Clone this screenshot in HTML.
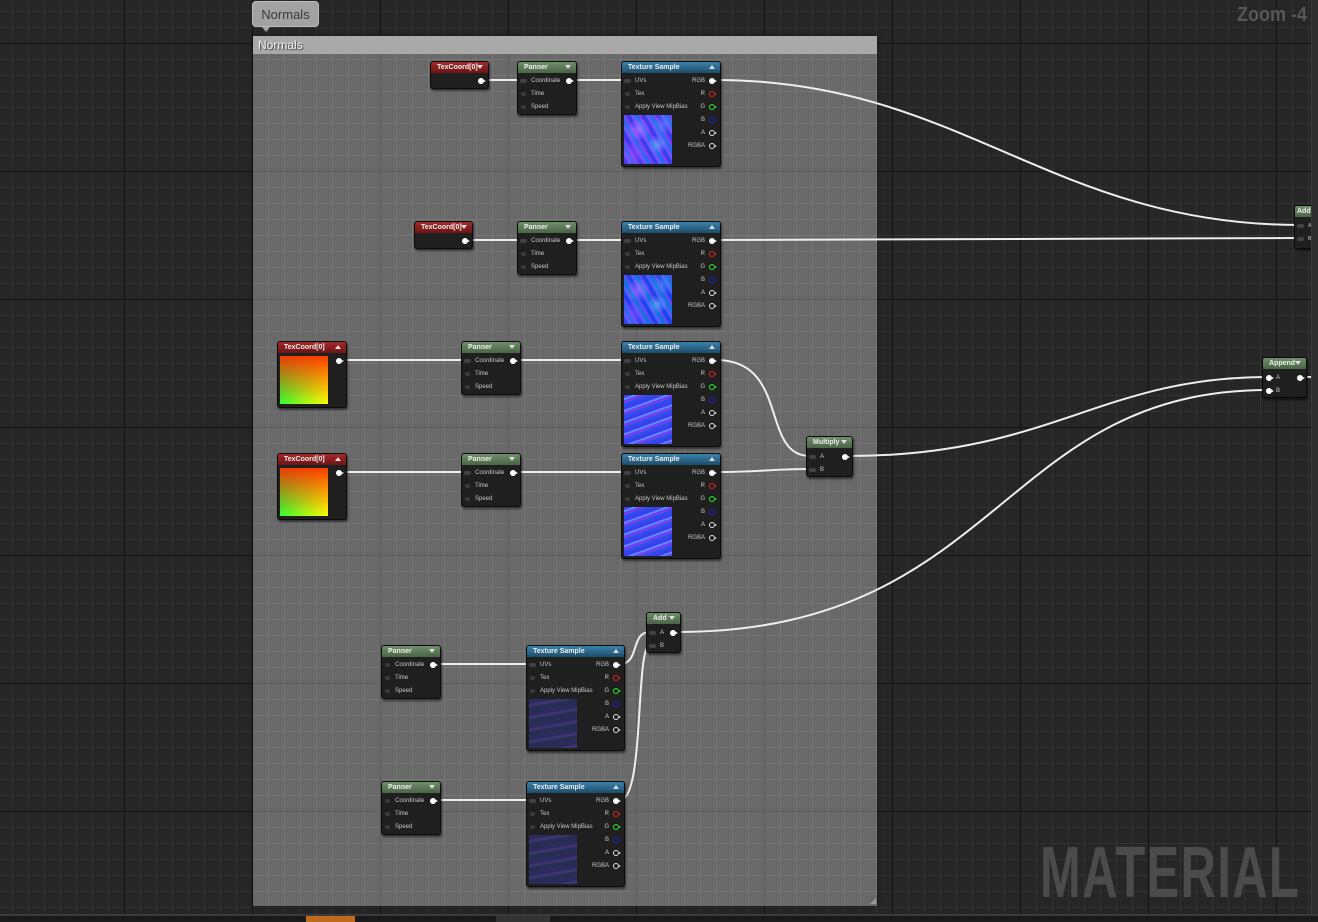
<!DOCTYPE html>
<html><head><meta charset="utf-8"><style>
*{margin:0;padding:0;box-sizing:border-box}
body{width:1318px;height:922px;overflow:hidden;position:relative;font-family:"Liberation Sans",sans-serif;
background-color:#262626;
background-image:
linear-gradient(to right,#141414 1px,transparent 1px),
linear-gradient(to bottom,#141414 1px,transparent 1px),
linear-gradient(to right,#323232 1px,transparent 1px),
linear-gradient(to bottom,#323232 1px,transparent 1px);
background-size:128px 128px,128px 128px,16px 16px,16px 16px;
background-position:124px 43px,124px 43px,12px 11px,12px 11px;}
.cm{position:absolute;left:253px;top:36px;width:624px;height:870px;background-color:#696969;
background-image:
linear-gradient(to right,#5c5c5c 1px,transparent 1px),
linear-gradient(to bottom,#5c5c5c 1px,transparent 1px),
linear-gradient(to right,#767676 1px,transparent 1px),
linear-gradient(to bottom,#767676 1px,transparent 1px);
background-size:128px 128px,128px 128px,16px 16px,16px 16px;
background-position:-129px 7px,-129px 7px,-241px 7px,-241px 7px;box-shadow:0 0 4px rgba(0,0,0,.5)}
.cmh{position:absolute;left:253px;top:36px;width:624px;height:18px;background:#a9a9a9;color:#f2f2f2;font-size:12px;line-height:19px;padding-left:5px;text-shadow:1px 1px 1px #333}
.tip{position:absolute;left:252px;top:1px;width:67px;height:26px;background:#a2a2a2;border-radius:4px;color:#3a3a3a;font-size:13px;line-height:25px;text-align:center;border:1px solid #bbb}
.tip:after{content:"";position:absolute;left:9px;bottom:-6px;border:4px solid transparent;border-top:5px solid #a2a2a2;border-bottom:0}
.n{position:absolute;background:#1e1f1e;border:1px solid #0b0b0b;border-radius:3px;box-shadow:1px 2px 2px rgba(0,0,0,.55)}
.h{height:11px;border-radius:2px 2px 0 0;font-size:7px;font-weight:bold;color:#eee;padding-left:6px;line-height:11px;position:relative;white-space:nowrap;overflow:hidden}
.h:after{content:"";position:absolute;right:5px;top:3px;border:3px solid transparent;border-top:4px solid #ddd;border-bottom:0}
.h.up:after{border-top:0;border-bottom:4px solid #ddd}
.red{background:linear-gradient(#a32a2a,#6e1414)}
.grn{background:linear-gradient(#6f8f6a,#4a6446)}
.blu{background:linear-gradient(#3a82aa,#1f4d6a)}
.l{position:absolute;font-size:6px;color:#c8c8c8;line-height:7px;white-space:nowrap;margin-top:1px}
.rr{position:absolute;font-size:6px;color:#c8c8c8;line-height:7px;text-align:right;white-space:nowrap;margin-top:1px}
.pi{position:absolute;width:7px;height:4px;border-radius:3px;background:#3a3a3a}
.po{position:absolute;width:6px;height:6px;border-radius:50%;background:#fff}
.po:after{content:"";position:absolute;left:6px;top:1.5px;border:1.5px solid transparent;border-left:2px solid #fff;border-right:0}
.ph{position:absolute;width:6px;height:6px;border-radius:50%;border:1px solid #ddd}
.ph:after{content:"";position:absolute;left:5px;top:0.5px;border:1.5px solid transparent;border-left:2px solid currentColor;border-right:0}
.img{position:absolute;left:2px;width:48px;height:49px}
.nm{background:
radial-gradient(circle at 30% 30%,rgba(190,120,255,.7),transparent 25%),
radial-gradient(circle at 70% 60%,rgba(120,200,255,.6),transparent 22%),
radial-gradient(circle at 20% 80%,rgba(170,70,255,.6),transparent 25%),
radial-gradient(circle at 80% 20%,rgba(90,150,255,.6),transparent 20%),
repeating-linear-gradient(60deg,#3b3cf0 0 4px,#6a55ff 4px 7px,#2a68ee 7px 11px,#8a3cf5 11px 13px);}
.nw{background:
repeating-linear-gradient(160deg,#3d3cf2 0 3px,#5a8cff 3px 5px,#7040f0 5px 8px,#2a50e8 8px 11px),#3b3cf0;}
.dk{background:repeating-linear-gradient(170deg,#2c2c5c 0 5px,#3d3570 5px 8px,#262e52 8px 12px)}
.tc{background:linear-gradient(to right,#3f3 0%,#ff0 100%);position:absolute;left:2px;top:14px;width:48px;height:48px}
.tc:after{content:"";position:absolute;inset:0;background:linear-gradient(to top,rgba(255,255,0,0),rgba(255,40,0,.9) 100%)}
.zoom{position:absolute;left:1237px;top:4px;font-size:20px;font-weight:bold;color:#575757;transform:scaleX(.9);transform-origin:left top}
.mat{position:absolute;left:1040px;top:832px;font-size:72px;font-weight:bold;color:#4b4b4b;transform:scaleX(.68);transform-origin:left top;letter-spacing:2px;white-space:nowrap}
.bar{position:absolute;left:0;top:914px;width:1318px;height:8px;background:#1a1a1a;border-top:2px solid #3a3a3a}
</style></head><body>
<div class="zoom">Zoom -4</div>
<div class="mat">MATERIAL</div>
<div class="cm"></div>
<div class="cmh">Normals</div>
<div class="tip">Normals</div>
<div style="position:absolute;left:870px;top:898px;border:3px solid transparent;border-right:3px solid #999;border-bottom:3px solid #999"></div>

<svg width="1318" height="922" style="position:absolute;left:0;top:0" fill="none" stroke="#eee" stroke-width="2">
<path d="M487 80H520M573 80H628M573 240H628M469 240H520"/>
<path d="M716 80C960 80 1050 225 1300 225"/>
<path d="M716 240C900 240 1100 238 1300 238"/>
<path d="M343 360H466M517 360H628M343 472H466M517 472H628"/>
<path d="M716 360C790 360 760 456 810 456"/>
<path d="M716 472C760 472 770 469 810 469"/>
<path d="M848 456C1050 456 1100 377 1268 377"/>
<path d="M676 632C1000 632 1000 390 1268 390"/>
<path d="M1300 377H1318"/>
<path d="M437 664H532M437 800H532"/>
<path d="M620 664C640 664 630 632 650 632"/>
<path d="M620 800C645 800 635 645 650 645"/>
</svg>

<!-- Row1 -->
<div class="n" style="left:430px;top:61px;width:59px;height:28px"><div class="h red">TexCoord[0]</div><div class="po" style="left:47px;top:16px"></div></div>
<div class="n" style="left:517px;top:61px;width:60px;height:54px"><div class="h grn">Panner</div>
<div class="pi" style="left:2px;top:17px;background:#444"></div><div class="l" style="left:13px;top:15px">Coordinate</div><div class="po" style="left:48px;top:16px"></div>
<div class="pi" style="left:3px;top:30px;width:5px"></div><div class="l" style="left:13px;top:28px">Time</div>
<div class="pi" style="left:3px;top:43px;width:5px"></div><div class="l" style="left:13px;top:41px">Speed</div></div>
<div class="n" style="left:621px;top:61px;width:100px;height:106px"><div class="h blu up">Texture Sample</div>
<div class="pi" style="left:2px;top:17px;background:#444"></div><div class="l" style="left:13px;top:15px">UVs</div>
<div class="pi" style="left:3px;top:30px;width:5px"></div><div class="l" style="left:13px;top:28px">Tex</div>
<div class="pi" style="left:3px;top:43px;width:5px"></div><div class="l" style="left:13px;top:41px">Apply View MipBias</div>
<div class="rr" style="right:15px;top:15px">RGB</div><div class="po" style="left:87px;top:16px"></div>
<div class="rr" style="right:15px;top:28px">R</div><div class="ph" style="left:87px;top:29px;border-color:#e22;color:#e22"></div>
<div class="rr" style="right:15px;top:41px">G</div><div class="ph" style="left:87px;top:42px;border-color:#2e2;color:#2e2"></div>
<div class="rr" style="right:15px;top:54px">B</div><div class="ph" style="left:87px;top:55px;border-color:#22c;color:#22c"></div>
<div class="rr" style="right:15px;top:67px">A</div><div class="ph" style="left:87px;top:68px;color:#ddd"></div>
<div class="rr" style="right:15px;top:80px">RGBA</div><div class="ph" style="left:87px;top:81px;color:#ddd"></div>
<div class="img nm" style="top:53px"></div></div>

<!-- Row2 -->
<div class="n" style="left:414px;top:221px;width:59px;height:28px"><div class="h red">TexCoord[0]</div><div class="po" style="left:47px;top:16px"></div></div>
<div class="n" style="left:517px;top:221px;width:60px;height:54px"><div class="h grn">Panner</div>
<div class="pi" style="left:2px;top:17px;background:#444"></div><div class="l" style="left:13px;top:15px">Coordinate</div><div class="po" style="left:48px;top:16px"></div>
<div class="pi" style="left:3px;top:30px;width:5px"></div><div class="l" style="left:13px;top:28px">Time</div>
<div class="pi" style="left:3px;top:43px;width:5px"></div><div class="l" style="left:13px;top:41px">Speed</div></div>
<div class="n" style="left:621px;top:221px;width:100px;height:106px"><div class="h blu up">Texture Sample</div>
<div class="pi" style="left:2px;top:17px;background:#444"></div><div class="l" style="left:13px;top:15px">UVs</div>
<div class="pi" style="left:3px;top:30px;width:5px"></div><div class="l" style="left:13px;top:28px">Tex</div>
<div class="pi" style="left:3px;top:43px;width:5px"></div><div class="l" style="left:13px;top:41px">Apply View MipBias</div>
<div class="rr" style="right:15px;top:15px">RGB</div><div class="po" style="left:87px;top:16px"></div>
<div class="rr" style="right:15px;top:28px">R</div><div class="ph" style="left:87px;top:29px;border-color:#e22;color:#e22"></div>
<div class="rr" style="right:15px;top:41px">G</div><div class="ph" style="left:87px;top:42px;border-color:#2e2;color:#2e2"></div>
<div class="rr" style="right:15px;top:54px">B</div><div class="ph" style="left:87px;top:55px;border-color:#22c;color:#22c"></div>
<div class="rr" style="right:15px;top:67px">A</div><div class="ph" style="left:87px;top:68px;color:#ddd"></div>
<div class="rr" style="right:15px;top:80px">RGBA</div><div class="ph" style="left:87px;top:81px;color:#ddd"></div>
<div class="img nm" style="top:53px;filter:hue-rotate(-10deg)"></div></div>

<!-- Row3 -->
<div class="n" style="left:277px;top:341px;width:70px;height:67px"><div class="h red up">TexCoord[0]</div><div class="tc"></div><div class="po" style="left:58px;top:16px"></div></div>
<div class="n" style="left:461px;top:341px;width:60px;height:54px"><div class="h grn">Panner</div>
<div class="pi" style="left:2px;top:17px;background:#444"></div><div class="l" style="left:13px;top:15px">Coordinate</div><div class="po" style="left:48px;top:16px"></div>
<div class="pi" style="left:3px;top:30px;width:5px"></div><div class="l" style="left:13px;top:28px">Time</div>
<div class="pi" style="left:3px;top:43px;width:5px"></div><div class="l" style="left:13px;top:41px">Speed</div></div>
<div class="n" style="left:621px;top:341px;width:100px;height:106px"><div class="h blu up">Texture Sample</div>
<div class="pi" style="left:2px;top:17px;background:#444"></div><div class="l" style="left:13px;top:15px">UVs</div>
<div class="pi" style="left:3px;top:30px;width:5px"></div><div class="l" style="left:13px;top:28px">Tex</div>
<div class="pi" style="left:3px;top:43px;width:5px"></div><div class="l" style="left:13px;top:41px">Apply View MipBias</div>
<div class="rr" style="right:15px;top:15px">RGB</div><div class="po" style="left:87px;top:16px"></div>
<div class="rr" style="right:15px;top:28px">R</div><div class="ph" style="left:87px;top:29px;border-color:#e22;color:#e22"></div>
<div class="rr" style="right:15px;top:41px">G</div><div class="ph" style="left:87px;top:42px;border-color:#2e2;color:#2e2"></div>
<div class="rr" style="right:15px;top:54px">B</div><div class="ph" style="left:87px;top:55px;border-color:#22c;color:#22c"></div>
<div class="rr" style="right:15px;top:67px">A</div><div class="ph" style="left:87px;top:68px;color:#ddd"></div>
<div class="rr" style="right:15px;top:80px">RGBA</div><div class="ph" style="left:87px;top:81px;color:#ddd"></div>
<div class="img nw" style="top:53px"></div></div>

<!-- Row4 -->
<div class="n" style="left:277px;top:453px;width:70px;height:67px"><div class="h red up">TexCoord[0]</div><div class="tc"></div><div class="po" style="left:58px;top:16px"></div></div>
<div class="n" style="left:461px;top:453px;width:60px;height:54px"><div class="h grn">Panner</div>
<div class="pi" style="left:2px;top:17px;background:#444"></div><div class="l" style="left:13px;top:15px">Coordinate</div><div class="po" style="left:48px;top:16px"></div>
<div class="pi" style="left:3px;top:30px;width:5px"></div><div class="l" style="left:13px;top:28px">Time</div>
<div class="pi" style="left:3px;top:43px;width:5px"></div><div class="l" style="left:13px;top:41px">Speed</div></div>
<div class="n" style="left:621px;top:453px;width:100px;height:106px"><div class="h blu up">Texture Sample</div>
<div class="pi" style="left:2px;top:17px;background:#444"></div><div class="l" style="left:13px;top:15px">UVs</div>
<div class="pi" style="left:3px;top:30px;width:5px"></div><div class="l" style="left:13px;top:28px">Tex</div>
<div class="pi" style="left:3px;top:43px;width:5px"></div><div class="l" style="left:13px;top:41px">Apply View MipBias</div>
<div class="rr" style="right:15px;top:15px">RGB</div><div class="po" style="left:87px;top:16px"></div>
<div class="rr" style="right:15px;top:28px">R</div><div class="ph" style="left:87px;top:29px;border-color:#e22;color:#e22"></div>
<div class="rr" style="right:15px;top:41px">G</div><div class="ph" style="left:87px;top:42px;border-color:#2e2;color:#2e2"></div>
<div class="rr" style="right:15px;top:54px">B</div><div class="ph" style="left:87px;top:55px;border-color:#22c;color:#22c"></div>
<div class="rr" style="right:15px;top:67px">A</div><div class="ph" style="left:87px;top:68px;color:#ddd"></div>
<div class="rr" style="right:15px;top:80px">RGBA</div><div class="ph" style="left:87px;top:81px;color:#ddd"></div>
<div class="img nw" style="top:53px"></div></div>

<!-- Multiply -->
<div class="n" style="left:806px;top:436px;width:47px;height:41px"><div class="h grn">Multiply</div>
<div class="pi" style="left:2px;top:18px;background:#444"></div><div class="l" style="left:13px;top:16px">A</div><div class="po" style="left:35px;top:17px"></div>
<div class="pi" style="left:2px;top:31px;background:#444"></div><div class="l" style="left:13px;top:29px">B</div></div>

<!-- Add inner -->
<div class="n" style="left:646px;top:612px;width:35px;height:41px"><div class="h grn">Add</div>
<div class="pi" style="left:2px;top:18px;background:#444"></div><div class="l" style="left:13px;top:16px">A</div><div class="po" style="left:23px;top:17px"></div>
<div class="pi" style="left:2px;top:31px;background:#444"></div><div class="l" style="left:13px;top:29px">B</div></div>

<!-- Bottom 1 -->
<div class="n" style="left:381px;top:645px;width:60px;height:54px"><div class="h grn">Panner</div>
<div class="pi" style="left:3px;top:17px;width:5px"></div><div class="l" style="left:13px;top:15px">Coordinate</div><div class="po" style="left:48px;top:16px"></div>
<div class="pi" style="left:3px;top:30px;width:5px"></div><div class="l" style="left:13px;top:28px">Time</div>
<div class="pi" style="left:3px;top:43px;width:5px"></div><div class="l" style="left:13px;top:41px">Speed</div></div>
<div class="n" style="left:526px;top:645px;width:99px;height:106px"><div class="h blu up">Texture Sample</div>
<div class="pi" style="left:2px;top:17px;background:#444"></div><div class="l" style="left:13px;top:15px">UVs</div>
<div class="pi" style="left:3px;top:30px;width:5px"></div><div class="l" style="left:13px;top:28px">Tex</div>
<div class="pi" style="left:3px;top:43px;width:5px"></div><div class="l" style="left:13px;top:41px">Apply View MipBias</div>
<div class="rr" style="right:15px;top:15px">RGB</div><div class="po" style="left:86px;top:16px"></div>
<div class="rr" style="right:15px;top:28px">R</div><div class="ph" style="left:86px;top:29px;border-color:#e22;color:#e22"></div>
<div class="rr" style="right:15px;top:41px">G</div><div class="ph" style="left:86px;top:42px;border-color:#2e2;color:#2e2"></div>
<div class="rr" style="right:15px;top:54px">B</div><div class="ph" style="left:86px;top:55px;border-color:#22c;color:#22c"></div>
<div class="rr" style="right:15px;top:67px">A</div><div class="ph" style="left:86px;top:68px;color:#ddd"></div>
<div class="rr" style="right:15px;top:80px">RGBA</div><div class="ph" style="left:86px;top:81px;color:#ddd"></div>
<div class="img dk" style="top:53px"></div></div>

<!-- Bottom 2 -->
<div class="n" style="left:381px;top:781px;width:60px;height:54px"><div class="h grn">Panner</div>
<div class="pi" style="left:3px;top:17px;width:5px"></div><div class="l" style="left:13px;top:15px">Coordinate</div><div class="po" style="left:48px;top:16px"></div>
<div class="pi" style="left:3px;top:30px;width:5px"></div><div class="l" style="left:13px;top:28px">Time</div>
<div class="pi" style="left:3px;top:43px;width:5px"></div><div class="l" style="left:13px;top:41px">Speed</div></div>
<div class="n" style="left:526px;top:781px;width:99px;height:106px"><div class="h blu up">Texture Sample</div>
<div class="pi" style="left:2px;top:17px;background:#444"></div><div class="l" style="left:13px;top:15px">UVs</div>
<div class="pi" style="left:3px;top:30px;width:5px"></div><div class="l" style="left:13px;top:28px">Tex</div>
<div class="pi" style="left:3px;top:43px;width:5px"></div><div class="l" style="left:13px;top:41px">Apply View MipBias</div>
<div class="rr" style="right:15px;top:15px">RGB</div><div class="po" style="left:86px;top:16px"></div>
<div class="rr" style="right:15px;top:28px">R</div><div class="ph" style="left:86px;top:29px;border-color:#e22;color:#e22"></div>
<div class="rr" style="right:15px;top:41px">G</div><div class="ph" style="left:86px;top:42px;border-color:#2e2;color:#2e2"></div>
<div class="rr" style="right:15px;top:54px">B</div><div class="ph" style="left:86px;top:55px;border-color:#22c;color:#22c"></div>
<div class="rr" style="right:15px;top:67px">A</div><div class="ph" style="left:86px;top:68px;color:#ddd"></div>
<div class="rr" style="right:15px;top:80px">RGBA</div><div class="ph" style="left:86px;top:81px;color:#ddd"></div>
<div class="img dk" style="top:53px"></div></div>

<!-- Right side -->
<div class="n" style="left:1294px;top:205px;width:30px;height:44px"><div class="h grn" style="padding-left:2px">Add</div>
<div class="pi" style="left:2px;top:18px;background:#444"></div><div class="l" style="left:13px;top:16px;font-size:5px">A</div>
<div class="pi" style="left:2px;top:31px;background:#444"></div><div class="l" style="left:13px;top:29px;font-size:5px">B</div></div>
<div class="n" style="left:1262px;top:357px;width:45px;height:41px"><div class="h grn">Append</div>
<div class="po" style="left:3px;top:17px"></div><div class="l" style="left:13px;top:16px">A</div><div class="po" style="left:34px;top:17px"></div>
<div class="po" style="left:3px;top:30px"></div><div class="l" style="left:13px;top:29px">B</div></div>
<div style="position:absolute;left:1311px;top:0;width:7px;height:914px;background:#2d2d2d;border-left:1px solid #3a3a3a"></div>

<div class="bar"></div>
<div style="position:absolute;left:306px;top:916px;width:49px;height:6px;background:#c06a20"></div>
<div style="position:absolute;left:496px;top:916px;width:54px;height:6px;background:#333"></div>
</body></html>
